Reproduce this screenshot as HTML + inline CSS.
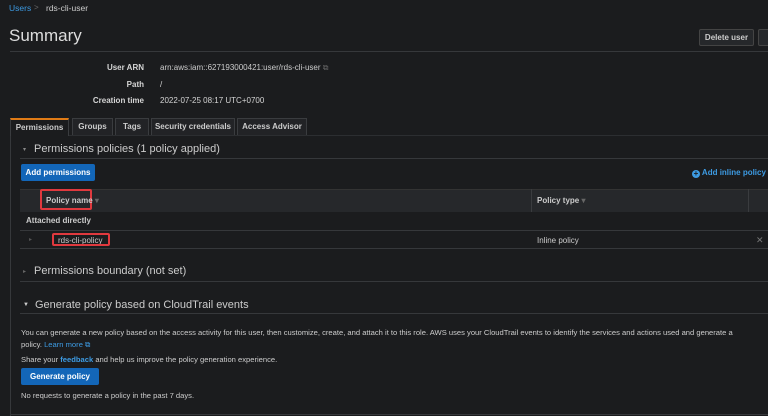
<!DOCTYPE html>
<html><head><style>
*{margin:0;padding:0;box-sizing:border-box}
body{width:768px;height:416px;background:#1b1c1e;font-family:"Liberation Sans",Arial,sans-serif;color:#d5d5d5;position:relative;overflow:hidden;font-size:8px}
.a{position:absolute;white-space:nowrap}
.b{font-weight:bold}
.blue{color:#3d9be3}
.btn{position:absolute;background:#1366b8;border-radius:2px;color:#fff;font-weight:bold;font-size:8px;text-align:center}
.line{position:absolute;height:1px;background:#36383b}
.red{position:absolute;border:2px solid #e0393e;border-radius:2px;z-index:5}
.tab{position:absolute;top:118px;height:17px;border:1px solid #3a3c3f;border-bottom:none;background:#222326;font-weight:bold;font-size:8px;text-align:center;line-height:16px;color:#ccc}
</style></head><body>
<div class="a blue" style="left:9px;top:3px;font-size:8.5px">Users</div>
<div class="a" style="left:34px;top:3px;color:#666;font-size:8px">&gt;</div>
<div class="a" style="left:46px;top:3px;font-size:8.5px;color:#ccc">rds-cli-user</div>
<div class="a" style="left:9px;top:26px;font-size:17px;color:#ddd">Summary</div>
<div class="a" style="left:699px;top:29px;width:55px;height:17px;border:1px solid #444;border-radius:2px;background:#26282b;font-weight:bold;text-align:center;line-height:15px;color:#ccc">Delete user</div>
<div class="a" style="left:758px;top:29px;width:20px;height:17px;border:1px solid #444;border-radius:2px;background:#26282b"></div>
<div class="line" style="left:10px;top:51px;width:758px"></div>
<div class="a b" style="right:624px;top:63px">User ARN</div>
<div class="a b" style="right:624px;top:80px">Path</div>
<div class="a b" style="right:624px;top:96px">Creation time</div>
<div class="a" style="left:160px;top:63px;color:#ccc">arn:aws:iam::627193000421:user/rds-cli-user <span style="color:#666">⧉</span></div>
<div class="a" style="left:160px;top:80px">/</div>
<div class="a" style="left:160px;top:96px">2022-07-25 08:17 UTC+0700</div>
<div class="tab" style="left:10px;width:59px;border-top:2px solid #e07b16;background:#1b1c1e;height:18px;z-index:2">Permissions</div>
<div class="tab" style="left:72px;width:41px">Groups</div>
<div class="tab" style="left:115px;width:34px">Tags</div>
<div class="tab" style="left:151px;width:84px">Security credentials</div>
<div class="tab" style="left:237px;width:70px">Access Advisor</div>
<div class="a" style="left:10px;top:135px;width:1px;height:281px;background:#36383b"></div>
<div class="line" style="left:10px;top:135px;width:758px;background:#2c2e31"></div>
<div class="line" style="left:10px;top:414px;width:758px"></div>
<div class="a" style="left:23px;top:146px;color:#888;font-size:6px">▾</div>
<div class="a" style="left:34px;top:143px;font-size:11px;color:#ccc">Permissions policies (1 policy applied)</div>
<div class="line" style="left:20px;top:158px;width:748px"></div>
<div class="btn" style="left:21px;top:164px;width:74px;height:17px;line-height:17px">Add permissions</div>
<div class="a b blue" style="left:692px;top:168px"><span style="display:inline-block;width:8px;height:8px;border-radius:50%;background:#3d9be3;color:#1b1c1e;font-size:8px;line-height:8px;text-align:center;vertical-align:-1px">+</span> Add inline policy</div>
<div class="a" style="left:20px;top:189px;width:748px;height:23px;background:#26282b;border-top:1px solid #333"></div>
<div class="a" style="left:531px;top:189px;width:1px;height:23px;background:#3a3c3f"></div>
<div class="a" style="left:748px;top:189px;width:1px;height:23px;background:#3a3c3f"></div>
<div class="a b" style="left:46px;top:196px;color:#ccc;z-index:6">Policy name <span style="color:#666">▾</span></div>
<div class="red" style="left:40px;top:189px;width:52px;height:21px"></div>
<div class="a b" style="left:537px;top:196px;color:#ccc">Policy type <span style="color:#666">▾</span></div>
<div class="a b" style="left:26px;top:216px;color:#ccc">Attached directly</div>
<div class="line" style="left:20px;top:230px;width:748px"></div>
<div class="a" style="left:29px;top:236px;color:#555;font-size:6px">▸</div>
<div class="a" style="left:58px;top:236px;color:#ccc">rds-cli-policy</div>
<div class="red" style="left:52px;top:233px;width:58px;height:13px"></div>
<div class="a" style="left:537px;top:236px;color:#ccc">Inline policy</div>
<div class="a" style="left:756px;top:235px;color:#777;font-size:9px">✕</div>
<div class="line" style="left:20px;top:248px;width:748px"></div>
<div class="a" style="left:23px;top:268px;color:#666;font-size:6px">▸</div>
<div class="a" style="left:34px;top:265px;font-size:11px;color:#ccc">Permissions boundary (not set)</div>
<div class="line" style="left:20px;top:281px;width:748px"></div>
<div class="a" style="left:23px;top:302px;color:#ccc;font-size:6px">▼</div>
<div class="a" style="left:35px;top:299px;font-size:11px;color:#ccc">Generate policy based on CloudTrail events</div>
<div class="line" style="left:20px;top:313px;width:748px"></div>
<div class="a" style="left:21px;top:327px;line-height:12px;color:#ccc;font-size:7.6px">You can generate a new policy based on the access activity for this user, then customize, create, and attach it to this role. AWS uses your CloudTrail events to identify the services and actions used and generate a<br>policy. <span class="blue">Learn more ⧉</span></div>
<div class="a" style="left:21px;top:355px;color:#ccc;font-size:7.6px">Share your <span class="blue b">feedback</span> and help us improve the policy generation experience.</div>
<div class="btn" style="left:21px;top:368px;width:78px;height:17px;line-height:17px">Generate policy</div>
<div class="a" style="left:21px;top:391px;color:#ccc;font-size:7.6px">No requests to generate a policy in the past 7 days.</div>
</body></html>
